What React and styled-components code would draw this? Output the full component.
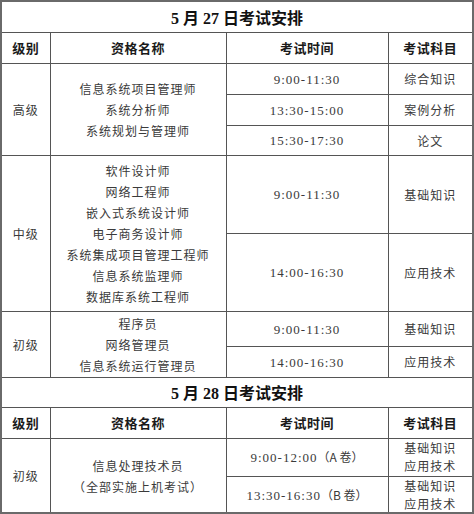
import React from 'react'
import styled, { createGlobalStyle } from 'styled-components'

const GlobalStyle = createGlobalStyle`
  html, body {
    margin: 0;
    padding: 0;
    background: #ffffff;
  }
  body {
    font-family: "Liberation Serif", "Noto Sans CJK SC", serif;
  }
`;

const Frame = styled.div`
  width: 474px;
  height: 514px;
  box-sizing: border-box;
  border: 2px solid #6a6a6a;
  overflow: hidden;
`;

const Table = styled.table`
  width: 470px;
  height: 510px;
  border-collapse: collapse;
  table-layout: fixed;
  border-style: hidden;
  color: #333333;
`;

const Row = styled.tr`
  height: ${p => p.$h}px;
`;

const TitleCell = styled.td`
  border: 1px solid #555555;
  text-align: center;
  vertical-align: middle;
  font-size: 16px;
  font-weight: bold;
  color: #111111;
  padding: 0;
`;

const HeadCell = styled.th`
  border: 1px solid #555555;
  text-align: center;
  vertical-align: middle;
  font-family: "Noto Sans CJK SC", sans-serif;
  font-size: 13px;
  font-weight: bold;
  color: #1a1a1a;
  letter-spacing: 0.5px;
  padding: 0;
`;

const Cell = styled.td`
  border: 1px solid #555555;
  text-align: center;
  vertical-align: middle;
  font-family: "Noto Sans CJK SC", sans-serif;
  font-size: 12px;
  letter-spacing: 1px;
  line-height: ${p => p.$lh || 21}px;
  color: #3a3a3a;
  padding: 0;
`;

const Time = styled.span`
  font-family: "Liberation Serif", serif;
  font-size: 13px;
  letter-spacing: 1px;
`;

const Paper = styled.span`
  font-family: "Noto Sans CJK SC", sans-serif;
  font-size: 12px;
  letter-spacing: 0;
`;

const Line = styled.div``;

const Lines = ({ items }) => items.map(t => <Line key={t}>{t}</Line>);

function Header() {
  return (
    <Row $h={31}>
      <HeadCell>级别</HeadCell>
      <HeadCell>资格名称</HeadCell>
      <HeadCell>考试时间</HeadCell>
      <HeadCell>考试科目</HeadCell>
    </Row>
  )
}

export default function App() {
  return (
    <>
      <GlobalStyle />
      <Frame>
        <Table>
          <colgroup>
            <col style={{ width: 48 }} />
            <col style={{ width: 176 }} />
            <col style={{ width: 162 }} />
            <col style={{ width: 84 }} />
          </colgroup>
          <tbody>
            <Row $h={30}>
              <TitleCell colSpan={4}>5 月 27 日考试安排</TitleCell>
            </Row>
            <Header />
            <Row $h={31}>
              <Cell rowSpan={3}>高级</Cell>
              <Cell rowSpan={3}>
                <Lines items={['信息系统项目管理师', '系统分析师', '系统规划与管理师']} />
              </Cell>
              <Cell><Time>9:00-11:30</Time></Cell>
              <Cell>综合知识</Cell>
            </Row>
            <Row $h={31}>
              <Cell><Time>13:30-15:00</Time></Cell>
              <Cell>案例分析</Cell>
            </Row>
            <Row $h={30}>
              <Cell><Time>15:30-17:30</Time></Cell>
              <Cell>论文</Cell>
            </Row>
            <Row $h={78}>
              <Cell rowSpan={2}>中级</Cell>
              <Cell rowSpan={2}>
                <Lines items={['软件设计师', '网络工程师', '嵌入式系统设计师', '电子商务设计师', '系统集成项目管理工程师', '信息系统监理师', '数据库系统工程师']} />
              </Cell>
              <Cell><Time>9:00-11:30</Time></Cell>
              <Cell>基础知识</Cell>
            </Row>
            <Row $h={78}>
              <Cell><Time>14:00-16:30</Time></Cell>
              <Cell>应用技术</Cell>
            </Row>
            <Row $h={35}>
              <Cell rowSpan={2}>初级</Cell>
              <Cell rowSpan={2}>
                <Lines items={['程序员', '网络管理员', '信息系统运行管理员']} />
              </Cell>
              <Cell><Time>9:00-11:30</Time></Cell>
              <Cell>基础知识</Cell>
            </Row>
            <Row $h={31}>
              <Cell><Time>14:00-16:30</Time></Cell>
              <Cell>应用技术</Cell>
            </Row>
            <Row $h={30}>
              <TitleCell colSpan={4}>5 月 28 日考试安排</TitleCell>
            </Row>
            <Header />
            <Row $h={38}>
              <Cell rowSpan={2}>初级</Cell>
              <Cell rowSpan={2}>
                <Lines items={['信息处理技术员', '（全部实施上机考试）']} />
              </Cell>
              <Cell><Time>9:00-12:00</Time><Paper>（A 卷）</Paper></Cell>
              <Cell $lh={18}><Lines items={['基础知识', '应用技术']} /></Cell>
            </Row>
            <Row $h={36}>
              <Cell><Time>13:30-16:30</Time><Paper>（B 卷）</Paper></Cell>
              <Cell $lh={18}><Lines items={['基础知识', '应用技术']} /></Cell>
            </Row>
          </tbody>
        </Table>
      </Frame>
    </>
  )
}
